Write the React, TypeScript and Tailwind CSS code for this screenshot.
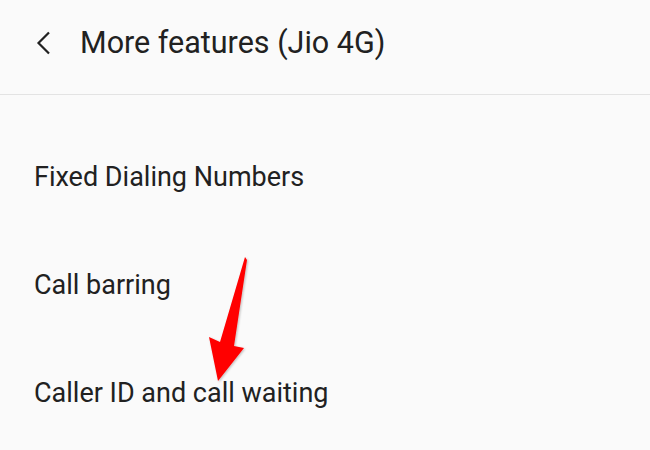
import React from 'react';

const items = ['Fixed Dialing Numbers', 'Call barring', 'Caller ID and call waiting'];

export default function App() {
  return (
    <div
      className="relative w-[650px] h-[450px] overflow-hidden bg-[#fafafa] text-[#212121]"
      style={{ fontFamily: 'Roboto, "Noto Sans", sans-serif' }}
    >
      <div className="flex items-center h-[95px] border-b border-[#e3e3e3]">
        <div className="w-[80px] flex pl-[35px] pb-[8px]">
          <svg width="18" height="24" viewBox="0 0 18 24" fill="none">
            <path d="M14 1.5 L3.5 12 L14 22.5" stroke="#212121" strokeWidth="2.2" />
          </svg>
        </div>
        <h1 className="text-[30.5px] leading-none pb-[8px]">More features (Jio 4G)</h1>
      </div>

      <ul className="pl-[34px] pt-[64px] flex flex-col gap-[72px]">
        {items.map((label) => (
          <li key={label} className="text-[27px] leading-[36px]">
            {label}
          </li>
        ))}
      </ul>

      {/* red annotation arrow */}
      <svg className="absolute left-0 top-0" width="650" height="450" viewBox="0 0 650 450">
        <defs>
          <filter id="sh" x="-50%" y="-50%" width="200%" height="200%">
            <feDropShadow dx="1" dy="1" stdDeviation="1.2" floodColor="#000" floodOpacity="0.25" />
          </filter>
        </defs>
        <polygon
          points="245,257 247,260 234,346 244,348 218,381 209,337 220,342"
          fill="#ff0000"
          filter="url(#sh)"
        />
      </svg>
    </div>
  );
}
